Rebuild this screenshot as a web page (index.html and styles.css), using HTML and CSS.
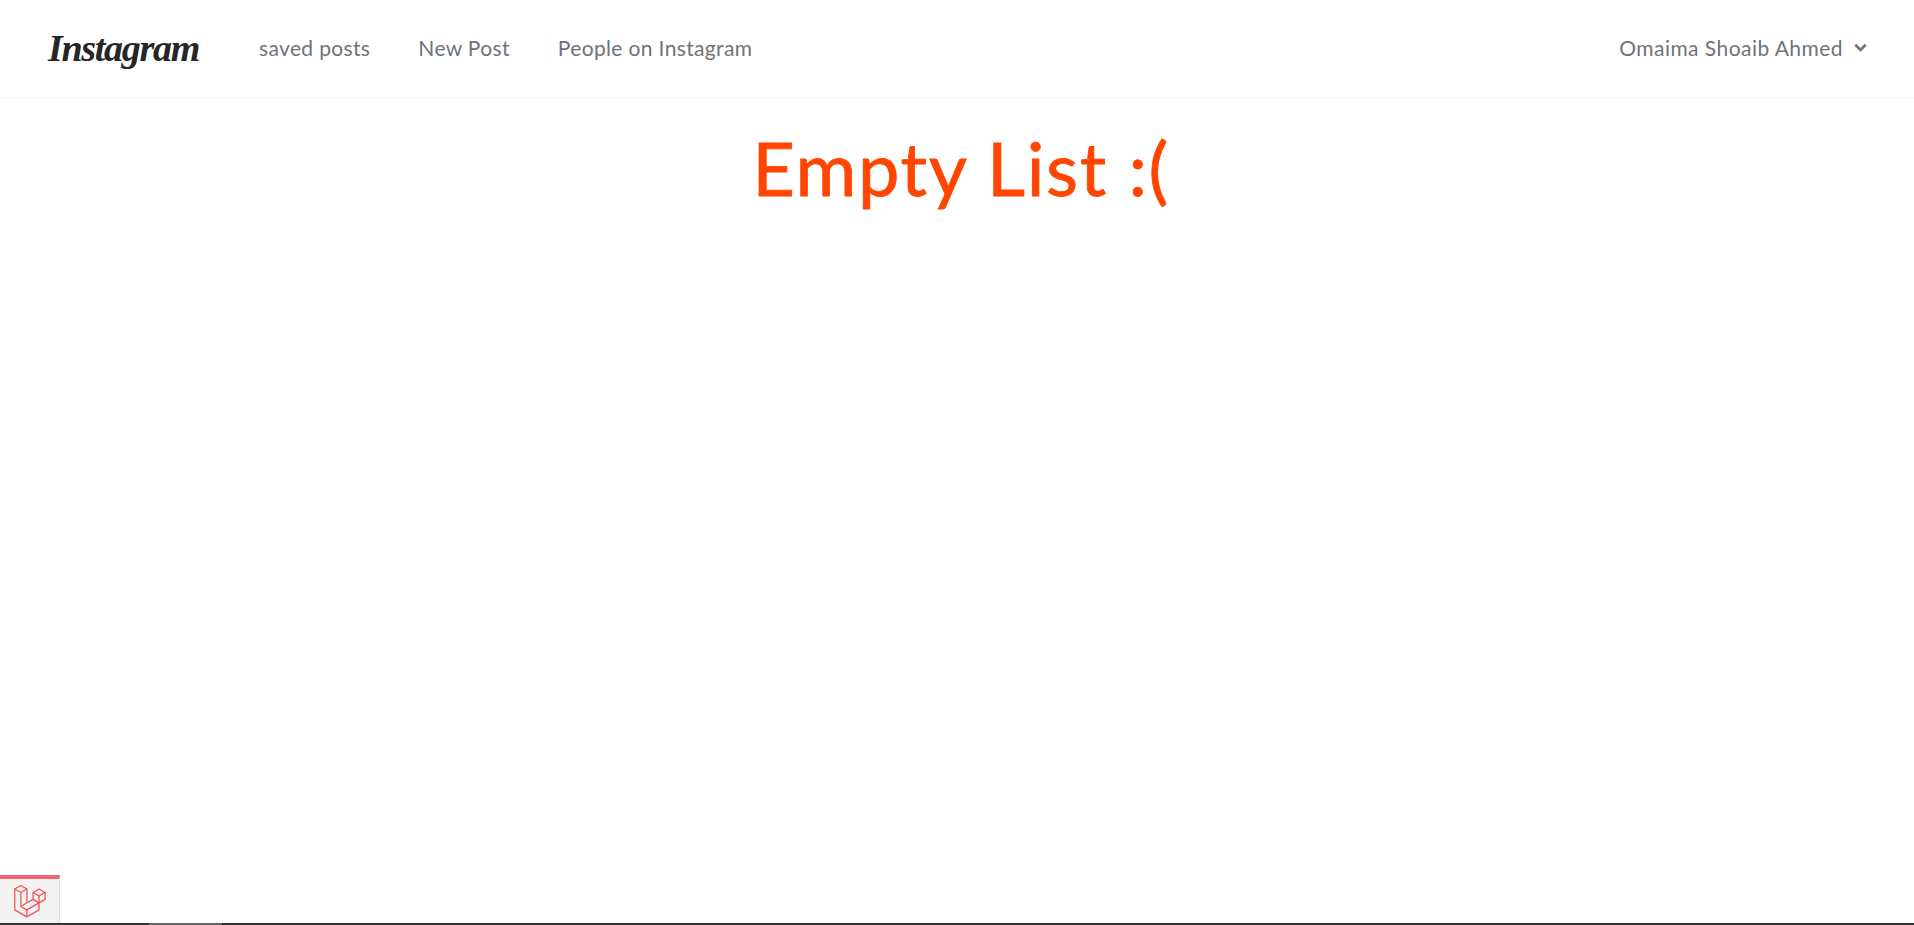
FILE: index.html

```html
<!DOCTYPE html>
<html lang="en">
<head>
    <meta charset="UTF-8">
    <title>Instagram</title>
    <link rel="stylesheet" href="styles.css">
</head>
<body>
    <nav class="navbar">
        <a class="brand" href="#">Instagram</a>
        <ul class="nav-links">
            <li><a href="#">saved posts</a></li>
            <li><a href="#">New Post</a></li>
            <li><a href="#">People on Instagram</a></li>
        </ul>
        <a class="user-menu" href="#">
            <span>Omaima Shoaib Ahmed</span>
            <svg class="chevron" viewBox="0 0 12 8" width="13" height="9">
                <path d="M1.2 1.5 6 6.2l4.8-4.7" fill="none" stroke="currentColor" stroke-width="2.6"/>
            </svg>
        </a>
    </nav>

    <main class="content">
        <h1 class="empty-title">Empty List :(</h1>
    </main>

    <!-- debug bar tab -->
    <div class="debugbar">
        <svg viewBox="0 0 50 52" width="32" height="33">
            <g fill="none" stroke="#f0555a" stroke-width="2" stroke-linejoin="round">
                <path d="M1 6.3 10.6.8l9.6 5.5-9.6 5.5z"/>
                <path d="M1 6.3v32.9l19 11 19.2-11v-11"/>
                <path d="M10.6 11.8v22l9.4 5.4 19.2-11"/>
                <path d="M20.2 6.3V28l-9.6 5.8"/>
                <path d="M20 39.2v11"/>
                <path d="M20.2 28l9.6-5.3 9.4 5.5 9.6-5.5"/>
                <path d="M29.8 11.8l9.4-5.5 9.6 5.5-9.6 5.4z"/>
                <path d="M29.8 11.8v10.9M48.8 11.8v10.9M39.2 17.2v11"/>
            </g>
        </svg>
    </div>

    <div class="bottom-strip"><span class="strip-thumb"></span></div>
</body>
</html>
```

FILE: styles.css

```css
html, body {
    height: 100%;
    margin: 0;
    padding: 0;
}
body {
    display: flex;
    flex-direction: column;
    background: #fff;
    font-family: "Lato", "Noto Sans", sans-serif;
    overflow: hidden;
}
a {
    color: inherit;
    text-decoration: none;
}

/* navbar */
.navbar {
    display: flex;
    align-items: center;
    height: 95px;
    padding: 0 47px 2px 48px;
    border-bottom: 1px solid #eeeeee;
    color: #6e7479;
    font-size: 21px;
    letter-spacing: .35px;
}
.brand {
    width: 150px;
    margin-right: 61px;
    color: #262626;
    font-family: "Liberation Serif", serif;
    font-style: italic;
    font-weight: bold;
    font-size: 38px;
    letter-spacing: -1.3px;
    line-height: 1;
}
.nav-links {
    display: flex;
    gap: 48px;
    margin: 0;
    padding: 0;
    list-style: none;
}
.user-menu {
    display: flex;
    align-items: center;
    gap: 11px;
    margin-left: auto;
    letter-spacing: .45px;
}

/* content */
.content {
    flex: 1;
    text-align: center;
}
.empty-title {
    margin: 22px 0 0 8px;
    color: #ff4500;
    font-size: 74px;
    font-weight: 400;
    letter-spacing: 1.6px;
    line-height: 96px;
    -webkit-text-stroke: .8px #ff4500;
}

/* debug bar */
.debugbar {
    position: fixed;
    left: 0;
    bottom: 2px;
    display: flex;
    align-items: center;
    justify-content: center;
    box-sizing: border-box;
    width: 60px;
    height: 48px;
    border-top: 4px solid #ee6470;
    border-right: 1px solid #ddd;
    background: #f3f3f3;
}
.bottom-strip {
    height: 2px;
    background: #333;
}
.strip-thumb {
    display: block;
    width: 73px;
    height: 2px;
    margin-left: 149px;
    background: #666;
}
```
